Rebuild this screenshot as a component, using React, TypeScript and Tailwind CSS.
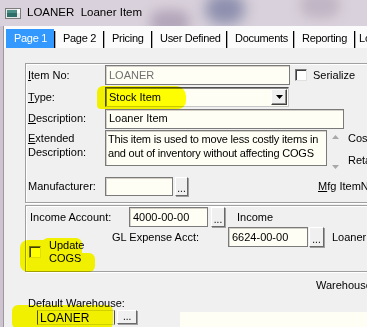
import type { ReactNode } from 'react'

const TABS = [
  { label: 'Page 1', w: 'w-[48px]', active: true },
  { label: 'Page 2', w: 'w-[47px]' },
  { label: 'Pricing', w: 'w-[46px]' },
  { label: 'User Defined', w: 'w-[73px]' },
  { label: 'Documents', w: 'w-[65px]' },
  { label: 'Reporting', w: 'w-[59px]' },
]

function Field({ className, children }: { className: string; children?: ReactNode }) {
  return (
    <div
      className={`flex items-center pl-[3px] bg-[#fffef4] border border-[#7a7a7a] shadow-[inset_1px_1px_0_#d4d0c8] whitespace-nowrap overflow-hidden ${className}`}
    >
      {children}
    </div>
  )
}

function Dots({ className }: { className: string }) {
  return (
    <div
      className={`flex items-end justify-center pb-[2px] bg-[#f0f0f0] border border-t-white border-l-white border-r-[#696969] border-b-[#696969] shadow-[1px_1px_0_#a0a0a0] text-[10px] leading-[8px] ${className}`}
    >
      ...
    </div>
  )
}

function Check() {
  return (
    <div className="w-[12px] h-[12px] bg-white border border-t-[#7a7a7a] border-l-[#7a7a7a] border-r-[#e0e0e0] border-b-[#e0e0e0] shadow-[inset_1px_1px_0_#404040]" />
  )
}

function Arrow({ up }: { up?: boolean }) {
  return (
    <svg width="7" height="4" viewBox="0 0 7 4">
      <polygon points={up ? '3.5,0 7,4 0,4' : '0,0 7,0 3.5,4'} fill="#a8a8a8" />
    </svg>
  )
}

export default function App() {
  return (
    <div className="relative w-[367px] h-[327px] overflow-hidden bg-[#cdc4d0] font-['Liberation_Sans',Arial,sans-serif] text-[11px] text-black">
      {/* Title bar */}
      <div className="relative h-[26px] flex items-center pl-[5px] bg-[#d9d1db] overflow-hidden">
        <div className="absolute left-[150px] top-[10px] w-[40px] h-[24px] rounded-full bg-[#b3a6ba] blur-[6px]" />
        <div className="absolute left-[205px] top-[-6px] w-[40px] h-[30px] rounded-full bg-[#8d8fae] blur-[7px]" />
        <div className="absolute left-[300px] top-[-8px] w-[40px] h-[26px] rounded-full bg-[#c0b5c4] blur-[6px]" />
        <svg width="16" height="11" viewBox="0 0 16 11" className="relative mt-[1px]">
          <rect x="0.5" y="0.5" width="15" height="10" fill="#e8e8e8" stroke="#7d7d7d" />
          <rect x="2" y="2" width="10" height="7" fill="#2f6f6a" />
          <rect x="2" y="2" width="10" height="3" fill="#4b8f86" />
          <rect x="12" y="1" width="3" height="4" fill="#ffffff" />
        </svg>
        <span className="relative ml-[6px] text-[11.5px] whitespace-pre">LOANER  Loaner Item</span>
      </div>

      <div className="ml-[3px] border-l border-[#9d97a0] h-[301px] bg-[#f0f0f0] flex flex-col">
        {/* Tabs */}
        <div className="h-[22px] shrink-0 bg-[#fbfbfb] flex items-end pl-[2px] whitespace-nowrap">
          {TABS.map((t) => (
            <div key={t.label} className="flex items-end h-full">
              <div
                className={`h-[19px] flex items-center pl-[7px] text-[11px] tracking-[-0.3px] ${t.w} ${
                  t.active ? 'bg-[#3399ff] text-white pl-[8px]' : ''
                }`}
              >
                {t.label}
              </div>
              <div className="w-[2px] h-[17px] border-l border-l-black border-r border-r-[#b0b0b0]" />
            </div>
          ))}
          <div className="h-[19px] flex items-center pl-[3px] text-[11px]">Lots</div>
        </div>

        {/* Group 1 */}
        <div className="mt-[15px] ml-[21px] w-[360px] h-[140px] shrink-0 border border-[#a0a0a0] shadow-[inset_1px_1px_0_#ffffff,1px_1px_0_#ffffff] flex flex-col">
          <div className="mt-[1px] h-[20px] flex items-center">
            <div className="w-[79px] pl-[2px]">
              <span className="underline">I</span>tem No:
            </div>
            <Field className="w-[185px] h-[20px] text-[#707070]">LOANER</Field>
            <div className="ml-[5px]">
              <Check />
            </div>
            <span className="ml-[6px]">Serialize</span>
          </div>

          <div className="mt-[2px] h-[20px] flex items-center">
            <div className="w-[79px] pl-[2px]">
              <span className="underline">T</span>ype:
            </div>
            <div className="w-[184px] h-[20px] flex items-center justify-between pl-[3px] pr-[1px] bg-[#fffef4] border border-t-[#505050] border-l-[#505050] border-r-[#c8c8c8] border-b-[#c8c8c8] shadow-[inset_1px_1px_0_#8a8a8a]">
              <span>Stock Item</span>
              <div className="w-[16px] h-[16px] flex items-center justify-center bg-[#f0f0f0] border border-t-white border-l-white border-r-[#404040] border-b-[#404040] shadow-[inset_-1px_-1px_0_#909090]">
                <svg width="7" height="4" viewBox="0 0 7 4">
                  <polygon points="0,0 7,0 3.5,4" fill="#000" />
                </svg>
              </div>
            </div>
          </div>

          <div className="mt-[2px] h-[19px] flex items-center">
            <div className="w-[79px] pl-[2px]">
              <span className="underline">D</span>escription:
            </div>
            <Field className="w-[239px] h-[20px]">Loaner Item</Field>
          </div>

          <div className="mt-[2px] h-[36px] flex items-start">
            <div className="w-[79px] pl-[2px] pt-[1px] leading-[14px]">
              <div>
                <span className="underline">E</span>xtended
              </div>
              <div>Description:</div>
            </div>
            <div className="w-[222px] h-[36px] bg-[#fffef4] border border-[#7a7a7a] shadow-[inset_1px_1px_0_#d4d0c8] pl-[2px] pt-[1px] leading-[14px] tracking-[-0.2px] whitespace-nowrap overflow-hidden">
              <div>This item is used to move less costly items in</div>
              <div>and out of inventory without affecting COGS</div>
            </div>
            <div className="w-[17px] h-[40px] flex flex-col items-center justify-between pt-[5px] pb-[1px]">
              <Arrow up />
              <Arrow />
            </div>
            <div className="ml-[4px] leading-[14px] whitespace-nowrap">
              <div className="pt-[1px]">Cost</div>
              <div className="mt-[8px]">Retail</div>
            </div>
          </div>

          <div className="mt-[11px] h-[19px] flex items-center">
            <div className="w-[79px] pl-[2px]">Manufacturer:</div>
            <Field className="w-[68px] h-[19px]" />
            <Dots className="ml-[2px] w-[13px] h-[19px]" />
            <span className="ml-[130px] whitespace-nowrap">
              <span className="underline">M</span>fg ItemNo
            </span>
          </div>
        </div>

        {/* Group 2 */}
        <div className="mt-[2px] ml-[21px] w-[360px] h-[67px] shrink-0 border border-[#a0a0a0] shadow-[inset_1px_1px_0_#ffffff,1px_1px_0_#ffffff] flex flex-col">
          <div className="mt-[1px] h-[20px] flex items-center">
            <div className="w-[103px] pl-[4px]">Income Account:</div>
            <Field className="w-[79px] h-[20px]">4000-00-00</Field>
            <Dots className="ml-[3px] w-[14px] h-[20px]" />
            <span className="ml-[12px]">Income</span>
          </div>
          <div className="flex items-start">
            <div className="w-[86px] pl-[3px] pt-[12px] flex items-start">
              <div className="mt-[7px]">
                <Check />
              </div>
              <div className="ml-[8px] leading-[13px]">
                <div>Update</div>
                <div>COGS</div>
              </div>
            </div>
            <div className="w-[116px] h-[20px] flex items-center">GL Expense Acct:</div>
            <Field className="w-[80px] h-[20px]">6624-00-00</Field>
            <Dots className="ml-[1px] w-[15px] h-[20px]" />
            <span className="ml-[8px] h-[20px] flex items-center">Loaner</span>
          </div>
        </div>

        <div className="mt-[7px] ml-[312px] h-[13px] leading-[13px] whitespace-nowrap">Warehouse</div>
        <div className="mt-[5px] ml-[24px] h-[13px] leading-[13px]">Default Warehouse:</div>
        <div className="flex items-start">
          <div className="ml-[33px] w-[83px] h-[15px] flex items-center pl-[2px] border border-x-[#505050] border-y-[#d0d0d0] bg-[#f0f0f0] text-[12px]">
            LOANER
          </div>
          <Dots className="ml-[2px] w-[22px] h-[14px]" />
          <div className="ml-[43px] mt-[2px] w-[200px] h-[20px] bg-[#fffef4]" />
        </div>
      </div>

      {/* Highlighter marks */}
      <div className="absolute left-[97px] top-[86px] w-[89px] h-[23px] rounded-[6px_10px_8px_4px] bg-[#ffff00] mix-blend-multiply pointer-events-none" />
      <div className="absolute left-[20px] top-[240px] w-[62px] h-[32px] rounded-[8px] bg-[#ffff00] mix-blend-multiply pointer-events-none" />
      <div className="absolute left-[42px] top-[238px] w-[40px] h-[12px] rounded-[6px] bg-[#ffff00] mix-blend-multiply pointer-events-none" />
      <div className="absolute left-[60px] top-[253px] w-[35px] h-[19px] rounded-[6px] bg-[#ffff00] mix-blend-multiply pointer-events-none" />
      <div className="absolute left-[12px] top-[305px] w-[101px] h-[24px] rounded-[6px] bg-[#ffff00] mix-blend-multiply pointer-events-none" />
    </div>
  )
}
